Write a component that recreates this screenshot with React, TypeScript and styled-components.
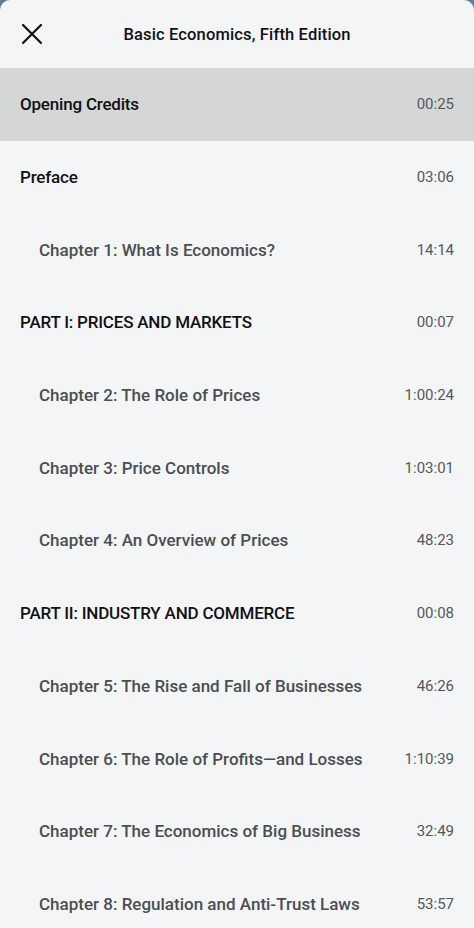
import React from 'react';
import styled, { createGlobalStyle } from 'styled-components';

interface Track {
  title: string;
  time: string;
  level: 0 | 1;
  active?: boolean;
}

const tracks: Track[] = [
  { title: 'Opening Credits', time: '00:25', level: 0, active: true },
  { title: 'Preface', time: '03:06', level: 0 },
  { title: 'Chapter 1: What Is Economics?', time: '14:14', level: 1 },
  { title: 'PART I: PRICES AND MARKETS', time: '00:07', level: 0 },
  { title: 'Chapter 2: The Role of Prices', time: '1:00:24', level: 1 },
  { title: 'Chapter 3: Price Controls', time: '1:03:01', level: 1 },
  { title: 'Chapter 4: An Overview of Prices', time: '48:23', level: 1 },
  { title: 'PART II: INDUSTRY AND COMMERCE', time: '00:08', level: 0 },
  { title: 'Chapter 5: The Rise and Fall of Businesses', time: '46:26', level: 1 },
  { title: 'Chapter 6: The Role of Profits\u2014and Losses', time: '1:10:39', level: 1 },
  { title: 'Chapter 7: The Economics of Big Business', time: '32:49', level: 1 },
  { title: 'Chapter 8: Regulation and Anti-Trust Laws', time: '53:57', level: 1 },
];

const GlobalStyle = createGlobalStyle`
  html, body {
    margin: 0;
    padding: 0;
    background: #5b7f99;
  }
  body {
    font-family: Roboto, "Liberation Sans", sans-serif;
  }
`;

const Sheet = styled.div`
  width: 474px;
  height: 928px;
  overflow: hidden;
  background: #f4f5f7;
  border-radius: 10px 10px 0 0;
  display: flex;
  flex-direction: column;
`;

const Header = styled.div`
  height: 68px;
  flex-shrink: 0;
  display: grid;
  grid-template-columns: 64px 1fr 64px;
  align-items: center;
`;

const CloseButton = styled.button`
  border: none;
  background: none;
  padding: 0 0 0 22px;
  display: flex;
  align-items: center;
  cursor: pointer;
`;

const Title = styled.h1`
  margin: 0;
  text-align: center;
  font-size: 16.5px;
  font-weight: 500;
  color: #111;
  letter-spacing: 0.15px;
`;

const Row = styled.div<{ $active?: boolean }>`
  height: 72.7px;
  flex-shrink: 0;
  display: flex;
  align-items: center;
  justify-content: space-between;
  padding: 0 20px;
  background: ${(p) => (p.$active ? '#d5d7d6' : 'transparent')};
`;

const Name = styled.span<{ $level: number }>`
  font-size: 17px;
  font-weight: 500;
  padding-left: ${(p) => (p.$level === 1 ? '19px' : '0')};
  color: ${(p) => (p.$level === 1 ? '#4b4e51' : '#111')};
  letter-spacing: ${(p) => (p.$level === 1 ? '0' : '-0.2px')};
`;

const Time = styled.span`
  font-size: 15px;
  color: #55585b;
`;

const CloseIcon = () => (
  <svg width="20" height="20" viewBox="0 0 20 20">
    <path d="M1 1 L19 19 M19 1 L1 19" stroke="#111" strokeWidth="2.2" strokeLinecap="round" />
  </svg>
);

export default function App() {
  return (
    <>
      <GlobalStyle />
      <Sheet>
        <Header>
          <CloseButton aria-label="Close">
            <CloseIcon />
          </CloseButton>
          <Title>Basic Economics, Fifth Edition</Title>
          <span />
        </Header>
        {tracks.map((t) => (
          <Row key={t.title} $active={t.active}>
            <Name $level={t.level}>{t.title}</Name>
            <Time>{t.time}</Time>
          </Row>
        ))}
      </Sheet>
    </>
  );
}
